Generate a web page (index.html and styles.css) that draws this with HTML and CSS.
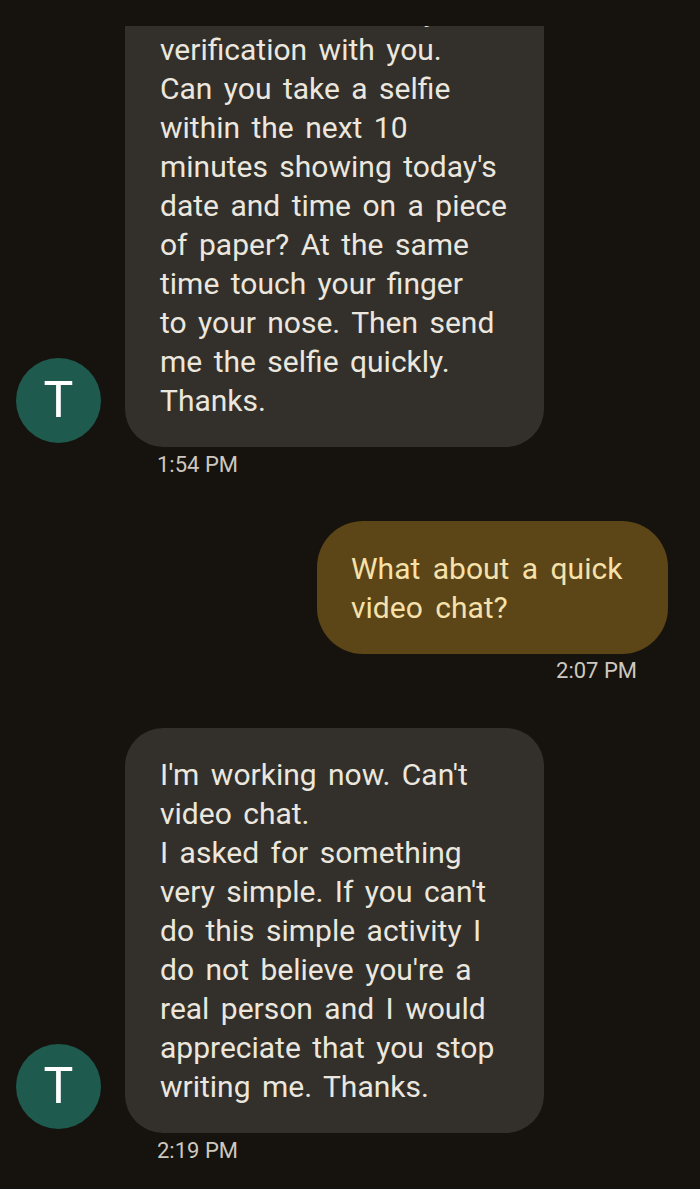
FILE: index.html
```html
<!DOCTYPE html>
<html>
	<head>
		<meta charset="UTF-8">
		<title>Messages</title>
		<link rel="stylesheet" href="styles.css">
	</head>
	<body>
		<div class="thread">
			<!-- first message is scrolled off the top -->
			<div class="row in cut">
				<div class="avatar">T</div>
				<div class="bubble first">
					I need to do identity<br>
					verification with you.<br>
					Can you take a selfie<br>
					within the next 10<br>
					minutes showing today's<br>
					date and time on a piece<br>
					of paper? At the same<br>
					time touch your finger<br>
					to your nose. Then send<br>
					me the selfie quickly.<br>
					Thanks.
				</div>
			</div>
			<div class="stamp in">1:54 PM</div>

			<div class="row out">
				<div class="bubble mine">What about a quick<br>video chat?</div>
			</div>
			<div class="stamp out">2:07 PM</div>

			<div class="row in">
				<div class="avatar">T</div>
				<div class="bubble">
					I'm working now. Can't<br>
					video chat.<br>
					I asked for something<br>
					very simple. If you can't<br>
					do this simple activity I<br>
					do not believe you're a<br>
					real person and I would<br>
					appreciate that you stop<br>
					writing me. Thanks.
				</div>
			</div>
			<div class="stamp in">2:19 PM</div>
		</div>
	</body>
</html>
```
FILE: styles.css
```css
body {
	margin: 0;
	background-color: #16120d;
	font-family: Roboto, "Liberation Sans", sans-serif;
}

.thread {
	display: flex;
	flex-direction: column;
	padding-top: 26px;
}

.row {
	display: flex;
	align-items: flex-end;
}

.row.in {
	padding-left: 16px;
	gap: 24px;
}

.row.out {
	justify-content: flex-end;
	padding-right: 32px;
	margin-top: 43px;
}

/* top bubble is cut by the screen edge */
.cut {
	overflow: hidden;
}

.avatar {
	width: 85px;
	height: 85px;
	border-radius: 50%;
	background-color: #1e5a4e;
	color: #ffffff;
	font-size: 50px;
	line-height: 85px;
	text-align: center;
	margin-bottom: 4px;
	flex-shrink: 0;
}

.bubble {
	box-sizing: border-box;
	width: 419px;
	padding: 27px 10px 27px 35px;
	background-color: #33302b;
	color: #ece7de;
	font-size: 30px;
	line-height: 39px;
	word-spacing: 4px;
	border-radius: 38px;
}

.bubble.first {
	margin-top: -62px;
}

.bubble.mine {
	width: 351px;
	padding: 28px 10px 27px 34px;
	background-color: #5c4516;
	color: #f6e1ab;
	word-spacing: 5px;
	border-radius: 46px;
}

.stamp {
	font-size: 22px;
	line-height: 26px;
	color: #cdc8bf;
	margin-top: 5px;
}

.stamp.in {
	padding-left: 157px;
}

.stamp.out {
	align-self: flex-end;
	padding-right: 63px;
	margin-top: 4px;
}

.stamp.out + .row.in {
	margin-top: 44px;
}
```
